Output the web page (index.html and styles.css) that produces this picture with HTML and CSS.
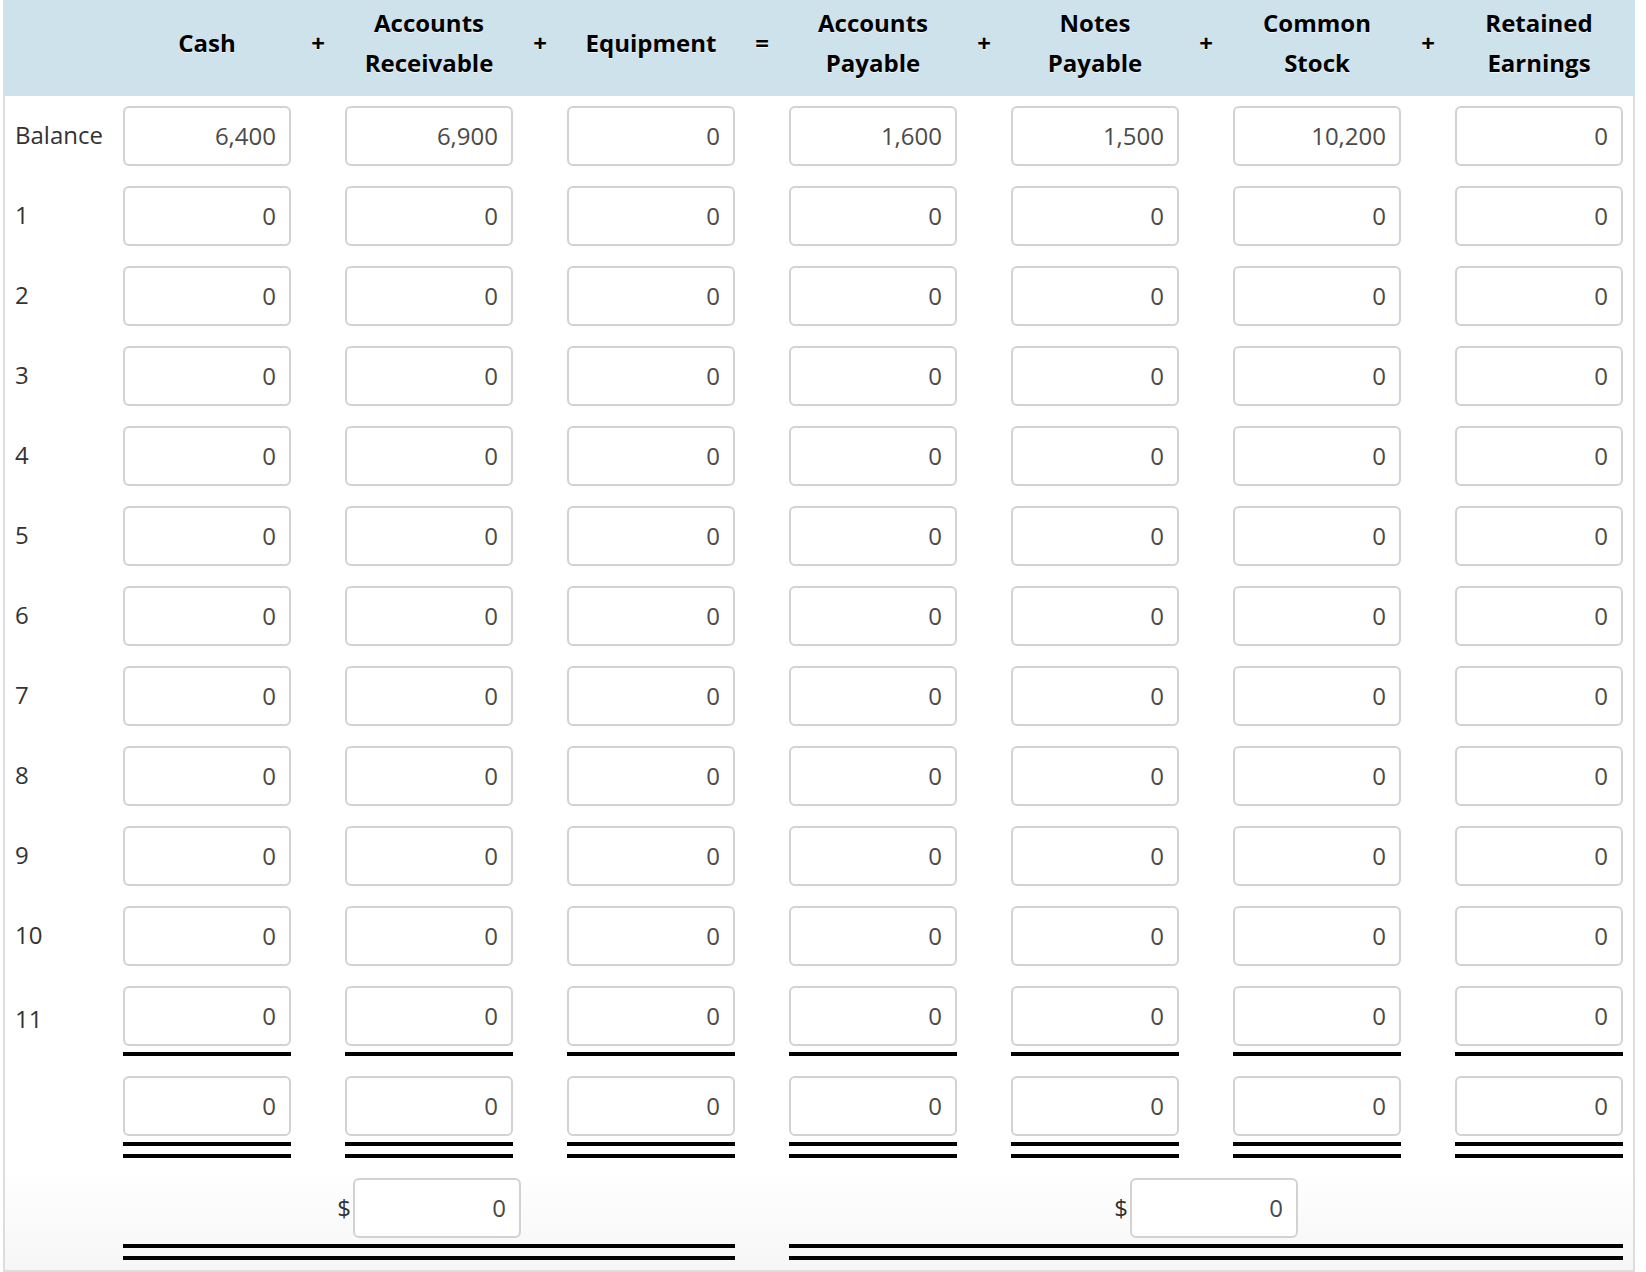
FILE: index.html
```html
<!DOCTYPE html>
<html lang="en">
<head>
<meta charset="utf-8">
<title>Accounting Equation Worksheet</title>
<link rel="stylesheet" href="styles.css">
</head>
<body>
<div class="sheet">
  <div class="head">
    <div class="hcell"></div>
    <div class="hcell single">Cash</div>
    <div class="hcell single op">+</div>
    <div class="hcell double">Accounts<br>Receivable</div>
    <div class="hcell single op">+</div>
    <div class="hcell single">Equipment</div>
    <div class="hcell single op">=</div>
    <div class="hcell double">Accounts<br>Payable</div>
    <div class="hcell single op">+</div>
    <div class="hcell double">Notes<br>Payable</div>
    <div class="hcell single op">+</div>
    <div class="hcell double">Common<br>Stock</div>
    <div class="hcell single op">+</div>
    <div class="hcell double">Retained<br>Earnings</div>
  </div>
  <div class="body">
    <div class="row">
      <div class="label">Balance</div>
      <input class="amt" type="text" value="6,400"><span></span>
      <input class="amt" type="text" value="6,900"><span></span>
      <input class="amt" type="text" value="0"><span></span>
      <input class="amt" type="text" value="1,600"><span></span>
      <input class="amt" type="text" value="1,500"><span></span>
      <input class="amt" type="text" value="10,200"><span></span>
      <input class="amt" type="text" value="0">
    </div>
    <div class="row">
      <div class="label">1</div>
      <input class="amt" type="text" value="0"><span></span><input class="amt" type="text" value="0"><span></span><input class="amt" type="text" value="0"><span></span><input class="amt" type="text" value="0"><span></span><input class="amt" type="text" value="0"><span></span><input class="amt" type="text" value="0"><span></span><input class="amt" type="text" value="0">
    </div>
    <div class="row">
      <div class="label">2</div>
      <input class="amt" type="text" value="0"><span></span><input class="amt" type="text" value="0"><span></span><input class="amt" type="text" value="0"><span></span><input class="amt" type="text" value="0"><span></span><input class="amt" type="text" value="0"><span></span><input class="amt" type="text" value="0"><span></span><input class="amt" type="text" value="0">
    </div>
    <div class="row">
      <div class="label">3</div>
      <input class="amt" type="text" value="0"><span></span><input class="amt" type="text" value="0"><span></span><input class="amt" type="text" value="0"><span></span><input class="amt" type="text" value="0"><span></span><input class="amt" type="text" value="0"><span></span><input class="amt" type="text" value="0"><span></span><input class="amt" type="text" value="0">
    </div>
    <div class="row">
      <div class="label">4</div>
      <input class="amt" type="text" value="0"><span></span><input class="amt" type="text" value="0"><span></span><input class="amt" type="text" value="0"><span></span><input class="amt" type="text" value="0"><span></span><input class="amt" type="text" value="0"><span></span><input class="amt" type="text" value="0"><span></span><input class="amt" type="text" value="0">
    </div>
    <div class="row">
      <div class="label">5</div>
      <input class="amt" type="text" value="0"><span></span><input class="amt" type="text" value="0"><span></span><input class="amt" type="text" value="0"><span></span><input class="amt" type="text" value="0"><span></span><input class="amt" type="text" value="0"><span></span><input class="amt" type="text" value="0"><span></span><input class="amt" type="text" value="0">
    </div>
    <div class="row">
      <div class="label">6</div>
      <input class="amt" type="text" value="0"><span></span><input class="amt" type="text" value="0"><span></span><input class="amt" type="text" value="0"><span></span><input class="amt" type="text" value="0"><span></span><input class="amt" type="text" value="0"><span></span><input class="amt" type="text" value="0"><span></span><input class="amt" type="text" value="0">
    </div>
    <div class="row">
      <div class="label">7</div>
      <input class="amt" type="text" value="0"><span></span><input class="amt" type="text" value="0"><span></span><input class="amt" type="text" value="0"><span></span><input class="amt" type="text" value="0"><span></span><input class="amt" type="text" value="0"><span></span><input class="amt" type="text" value="0"><span></span><input class="amt" type="text" value="0">
    </div>
    <div class="row">
      <div class="label">8</div>
      <input class="amt" type="text" value="0"><span></span><input class="amt" type="text" value="0"><span></span><input class="amt" type="text" value="0"><span></span><input class="amt" type="text" value="0"><span></span><input class="amt" type="text" value="0"><span></span><input class="amt" type="text" value="0"><span></span><input class="amt" type="text" value="0">
    </div>
    <div class="row">
      <div class="label">9</div>
      <input class="amt" type="text" value="0"><span></span><input class="amt" type="text" value="0"><span></span><input class="amt" type="text" value="0"><span></span><input class="amt" type="text" value="0"><span></span><input class="amt" type="text" value="0"><span></span><input class="amt" type="text" value="0"><span></span><input class="amt" type="text" value="0">
    </div>
    <div class="row">
      <div class="label">10</div>
      <input class="amt" type="text" value="0"><span></span><input class="amt" type="text" value="0"><span></span><input class="amt" type="text" value="0"><span></span><input class="amt" type="text" value="0"><span></span><input class="amt" type="text" value="0"><span></span><input class="amt" type="text" value="0"><span></span><input class="amt" type="text" value="0">
    </div>
    <div class="row last">
      <div class="label low">11</div>
      <div class="cell"><input class="amt" type="text" value="0"><div class="rule"></div></div><span></span>
      <div class="cell"><input class="amt" type="text" value="0"><div class="rule"></div></div><span></span>
      <div class="cell"><input class="amt" type="text" value="0"><div class="rule"></div></div><span></span>
      <div class="cell"><input class="amt" type="text" value="0"><div class="rule"></div></div><span></span>
      <div class="cell"><input class="amt" type="text" value="0"><div class="rule"></div></div><span></span>
      <div class="cell"><input class="amt" type="text" value="0"><div class="rule"></div></div><span></span>
      <div class="cell"><input class="amt" type="text" value="0"><div class="rule"></div></div>
    </div>
    <div class="row total">
      <div class="label"></div>
      <div class="cell"><input class="amt" type="text" value="0"><div class="rule2"></div></div><span></span>
      <div class="cell"><input class="amt" type="text" value="0"><div class="rule2"></div></div><span></span>
      <div class="cell"><input class="amt" type="text" value="0"><div class="rule2"></div></div><span></span>
      <div class="cell"><input class="amt" type="text" value="0"><div class="rule2"></div></div><span></span>
      <div class="cell"><input class="amt" type="text" value="0"><div class="rule2"></div></div><span></span>
      <div class="cell"><input class="amt" type="text" value="0"><div class="rule2"></div></div><span></span>
      <div class="cell"><input class="amt" type="text" value="0"><div class="rule2"></div></div>
    </div>
    <div class="row sums">
      <div class="label"></div>
      <div class="group g-left">
        <div class="dollar"><span class="sign">$</span><input class="amt" type="text" value="0"></div>
        <div class="rule2"></div>
      </div>
      <div class="group g-right">
        <div class="dollar"><span class="sign">$</span><input class="amt" type="text" value="0"></div>
        <div class="rule2"></div>
      </div>
    </div>
  </div>
</div>
</body>
</html>
```
FILE: styles.css
```css
* { box-sizing: border-box; }

body {
  margin: 0;
  background: #ffffff;
  font-family: "Open Sans", "DejaVu Sans", sans-serif;
  font-size: 24px;
  color: #333333;
}

.sheet {
  margin-left: 3px;
  width: 1632px;
}

.head {
  height: 96px;
  background: #cde2eb;
  padding-left: 2px;
  display: grid;
  grid-template-columns: 118px repeat(6, 168px 54px) 168px;
  align-items: start;
}

.hcell {
  font-weight: 700;
  color: #000;
  text-align: center;
  line-height: 40px;
  text-shadow: 0 1px 1px rgba(255, 255, 255, 0.75);
  white-space: nowrap;
}

.hcell.double { padding-top: 3px; }
.hcell.single { padding-top: 23px; }

.body {
  border: 2px solid #dddddd;
  border-top: 0;
  padding: 10px 0 10px;
  background: linear-gradient(to bottom, #ffffff 0, #ffffff calc(100% - 100px), #f6f6f6 100%);
}

.row {
  display: grid;
  grid-template-columns: 118px repeat(6, 168px 54px) 168px;
  align-items: start;
  margin-bottom: 20px;
}

.row.sums { margin-bottom: 0; }

.label {
  height: 60px;
  line-height: 58px;
  padding-left: 10px;
  color: #333;
}

.label.low { line-height: 66px; }

.amt {
  display: block;
  width: 168px;
  height: 60px;
  margin: 0;
  border: 2px solid #d2d2d2;
  border-radius: 6px;
  background: #ffffff;
  padding: 0 13px 2px 8px;
  text-align: right;
  font-family: "Open Sans", "DejaVu Sans", sans-serif;
  font-size: 24px;
  color: #4a4a4a;
  outline: none;
}

.cell { display: flex; flex-direction: column; }

.rule {
  margin-top: 6px;
  height: 4px;
  background: #000;
}

.rule2 {
  margin-top: 6px;
  height: 16px;
  border-top: 4px solid #000;
  border-bottom: 4px solid #000;
}

.group {
  display: flex;
  flex-direction: column;
}

.g-left { grid-column: 2 / 7; }
.g-right { grid-column: 8 / 15; }

.dollar {
  display: flex;
  justify-content: center;
  align-items: center;
  gap: 2px;
}

.sign {
  color: #333;
  font-size: 24px;
  line-height: 60px;
}
```
